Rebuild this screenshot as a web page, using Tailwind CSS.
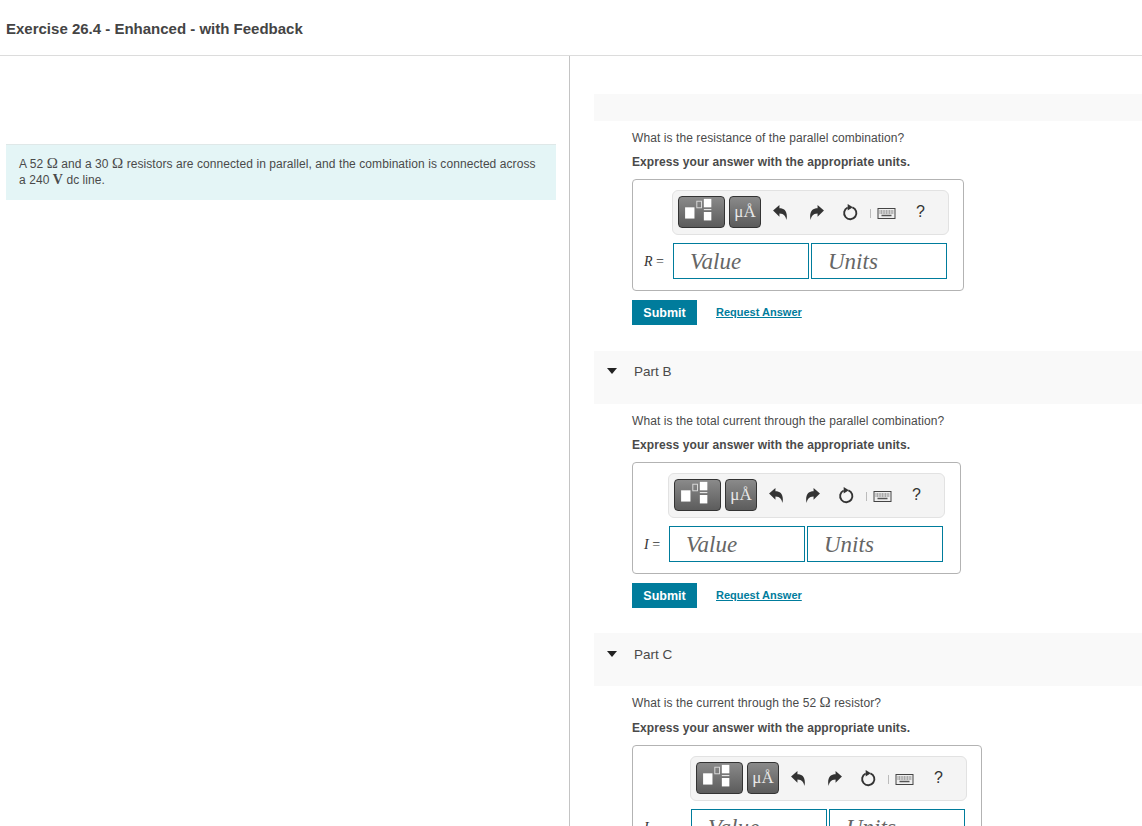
<!DOCTYPE html>
<html>
<head>
<meta charset="utf-8">
<script src="https://cdn.jsdelivr.net/npm/@tailwindcss/browser@4"></script>
</head>
<body class="bg-white overflow-hidden font-['Liberation_Sans',sans-serif] text-[#4a4a4a]">
<div class="w-[1142px] h-[826px] overflow-hidden flex flex-col">
  <header class="h-[56px] shrink-0 border-b border-[#dcdcdc] pl-[6px] pt-[19px] text-[15px] leading-[20px] font-bold text-[#444]">Exercise 26.4 - Enhanced - with Feedback</header>
  <div class="flex flex-1 min-h-0">
    <aside class="w-[570px] shrink-0 border-r border-[#c4c4c4] pl-[6px] pr-[13px] pt-[88px]">
      <div class="h-[56px] bg-[#e4f5f6] border-t border-[#dfe8e8] pl-[13px] pr-[10px] pt-[11px] text-[12px] leading-[16px] tracking-[0.07px] text-[#4a4a4a]">
        A 52 <span class="font-['Liberation_Serif',serif] text-[15px] leading-none">Ω</span> and a 30 <span class="font-['Liberation_Serif',serif] text-[15px] leading-none">Ω</span> resistors are connected in parallel, and the combination is connected across<br>a 240 <span class="font-['Liberation_Serif',serif] font-bold text-[14px] leading-none">V</span> dc line.
      </div>
    </aside>
    <main class="flex-1 min-w-0 pl-[24px] pt-[38px]">
      <div class="h-[27px] bg-[#f9f9f9]"></div>
      <section class="pl-[38px] pt-[9px]">
        <p class="text-[12px] leading-[16px] h-[16px] tracking-[0.08px]">What is the resistance of the parallel combination?</p>
        <p class="text-[12px] leading-[16px] h-[16px] mt-[8px] font-bold tracking-[0.085px]">Express your answer with the appropriate units.</p>
        <div class="mt-[9px] w-[332px] h-[112px] border border-[#b3b3b3] rounded-[4px] pt-[10px] pl-[39px]">
          <div class="flex items-center w-[277px] h-[45px] bg-[#f4f4f4] border border-[#e2e2e2] rounded-[6px] pl-[5px] pb-px">
            <button class="w-[47px] h-[32px] rounded-[4px] border border-[#333] bg-linear-to-b from-[#8a8a8a] to-[#5c5c5c]"><svg viewBox="0 0 47 32" class="w-full h-full"><rect x="6" y="11" width="10" height="12" fill="#fff"/><rect x="18.500" y="4.500" width="5" height="7" fill="none" stroke="#ddd"/><rect x="26" y="2" width="8" height="9" fill="#fff"/><rect x="26" y="13" width="8" height="1" fill="#fff"/><rect x="26" y="16" width="8" height="9" fill="#fff"/></svg></button>
            <button class="ml-[4px] w-[32px] h-[32px] rounded-[4px] border border-[#333] bg-linear-to-b from-[#8a8a8a] to-[#5c5c5c] font-['Liberation_Serif',serif] text-[#e8e8e8] text-[17px] leading-[28px]">μÅ</button>
            <svg viewBox="0 0 16 16" class="w-[17px] h-[17px] ml-[11px]"><path d="M1 6 7 1v3c4 0 7 2 7 8 0 1-.5 3-.5 3-.5-3-2-6-6.500-6v3z" fill="#333"/></svg>
            <svg viewBox="0 0 16 16" class="w-[17px] h-[17px] ml-[19px]"><path d="M15 6 9 1v3C5 4 2 6 2 12c0 1 .5 3 .5 3C3 12 4.500 9 9 9v3z" fill="#333"/></svg>
            <svg viewBox="0 0 18 18" class="w-[17px] h-[17px] ml-[17px]"><path d="M11 3.500a6.500 6.500 0 1 1-5 .2" fill="none" stroke="#333" stroke-width="2"/><path d="M6 0l5.500 3.500L6 7z" fill="#333"/></svg>
            <div class="w-px h-[9px] bg-[#bbb] ml-[11px] mt-[2px]"></div>
            <svg viewBox="0 0 18 11" class="w-[19px] h-[11px] ml-[6px] mt-[2px]"><rect x=".5" y=".5" width="17" height="10" fill="#eee" stroke="#444"/><path d="M2 3h14M2 5h14" stroke="#555" stroke-dasharray="1 .6"/><path d="M4 7.500h10" stroke="#555" stroke-width="1.500"/></svg>
            <span class="ml-[20px] text-[16px] leading-[16px] text-[#333]">?</span>
          </div>
          <div class="flex items-center mt-[8px] -ml-[28px]">
            <span class="w-[29px] font-['Liberation_Serif',serif] text-[14px] text-[#333] whitespace-nowrap"><i class="font-['Liberation_Serif',serif]">R</i> =</span>
            <div class="w-[136px] h-[36px] border border-[#007c9c] pl-[16px] font-['Liberation_Serif',serif] italic text-[23px] leading-[35px] text-[#666]">Value</div>
            <div class="ml-[2px] w-[136px] h-[36px] border border-[#007c9c] pl-[16px] font-['Liberation_Serif',serif] italic text-[23px] leading-[35px] text-[#666]">Units</div>
          </div>
        </div>
        <div class="flex items-center mt-[9px]">
          <button class="w-[65px] h-[25px] pt-px bg-[#007c9c] text-white text-[12.500px] font-bold">Submit</button>
          <a class="ml-[19px] text-[11px] font-bold text-[#007c9c] underline">Request Answer</a>
        </div>
      </section>
      <div class="mt-[26px] h-[53px] bg-[#f9f9f9] flex items-start pt-[13px] pl-[13px] text-[13.500px] leading-[16px]">
        <svg viewBox="0 0 10 6" class="w-[10px] h-[6px] mt-[4px]"><path d="M0 0h10L5 6z" fill="#222"/></svg>
        <span class="ml-[17px]">Part B</span>
      </div>
      <section class="pl-[38px] pt-[9px]">
        <p class="text-[12px] leading-[16px] h-[16px] tracking-[0.08px]">What is the total current through the parallel combination?</p>
        <p class="text-[12px] leading-[16px] h-[16px] mt-[8px] font-bold tracking-[0.085px]">Express your answer with the appropriate units.</p>
        <div class="mt-[9px] w-[329px] h-[112px] border border-[#b3b3b3] rounded-[4px] pt-[10px] pl-[35px]">
          <div class="flex items-center w-[277px] h-[45px] bg-[#f4f4f4] border border-[#e2e2e2] rounded-[6px] pl-[5px] pb-px">
            <button class="w-[47px] h-[32px] rounded-[4px] border border-[#333] bg-linear-to-b from-[#8a8a8a] to-[#5c5c5c]"><svg viewBox="0 0 47 32" class="w-full h-full"><rect x="6" y="11" width="10" height="12" fill="#fff"/><rect x="18.500" y="4.500" width="5" height="7" fill="none" stroke="#ddd"/><rect x="26" y="2" width="8" height="9" fill="#fff"/><rect x="26" y="13" width="8" height="1" fill="#fff"/><rect x="26" y="16" width="8" height="9" fill="#fff"/></svg></button>
            <button class="ml-[4px] w-[32px] h-[32px] rounded-[4px] border border-[#333] bg-linear-to-b from-[#8a8a8a] to-[#5c5c5c] font-['Liberation_Serif',serif] text-[#e8e8e8] text-[17px] leading-[28px]">μÅ</button>
            <svg viewBox="0 0 16 16" class="w-[17px] h-[17px] ml-[11px]"><path d="M1 6 7 1v3c4 0 7 2 7 8 0 1-.5 3-.5 3-.5-3-2-6-6.500-6v3z" fill="#333"/></svg>
            <svg viewBox="0 0 16 16" class="w-[17px] h-[17px] ml-[19px]"><path d="M15 6 9 1v3C5 4 2 6 2 12c0 1 .5 3 .5 3C3 12 4.500 9 9 9v3z" fill="#333"/></svg>
            <svg viewBox="0 0 18 18" class="w-[17px] h-[17px] ml-[17px]"><path d="M11 3.500a6.500 6.500 0 1 1-5 .2" fill="none" stroke="#333" stroke-width="2"/><path d="M6 0l5.500 3.500L6 7z" fill="#333"/></svg>
            <div class="w-px h-[9px] bg-[#bbb] ml-[11px] mt-[2px]"></div>
            <svg viewBox="0 0 18 11" class="w-[19px] h-[11px] ml-[6px] mt-[2px]"><rect x=".5" y=".5" width="17" height="10" fill="#eee" stroke="#444"/><path d="M2 3h14M2 5h14" stroke="#555" stroke-dasharray="1 .6"/><path d="M4 7.500h10" stroke="#555" stroke-width="1.500"/></svg>
            <span class="ml-[20px] text-[16px] leading-[16px] text-[#333]">?</span>
          </div>
          <div class="flex items-center mt-[8px] -ml-[24px]">
            <span class="w-[25px] font-['Liberation_Serif',serif] text-[14px] text-[#333] whitespace-nowrap"><i class="font-['Liberation_Serif',serif]">I</i> =</span>
            <div class="w-[136px] h-[36px] border border-[#007c9c] pl-[16px] font-['Liberation_Serif',serif] italic text-[23px] leading-[35px] text-[#666]">Value</div>
            <div class="ml-[2px] w-[136px] h-[36px] border border-[#007c9c] pl-[16px] font-['Liberation_Serif',serif] italic text-[23px] leading-[35px] text-[#666]">Units</div>
          </div>
        </div>
        <div class="flex items-center mt-[9px]">
          <button class="w-[65px] h-[25px] pt-px bg-[#007c9c] text-white text-[12.500px] font-bold">Submit</button>
          <a class="ml-[19px] text-[11px] font-bold text-[#007c9c] underline">Request Answer</a>
        </div>
      </section>
      <div class="mt-[25px] h-[53px] bg-[#f9f9f9] flex items-start pt-[14px] pl-[13px] text-[13.500px] leading-[16px]">
        <svg viewBox="0 0 10 6" class="w-[10px] h-[6px] mt-[4px]"><path d="M0 0h10L5 6z" fill="#222"/></svg>
        <span class="ml-[17px]">Part C</span>
      </div>
      <section class="pl-[38px] pt-[9px]">
        <p class="text-[12px] leading-[16px] h-[16px] tracking-[0.08px]">What is the current through the 52 <span class="font-['Liberation_Serif',serif] text-[15px] leading-none">Ω</span> resistor?</p>
        <p class="text-[12px] leading-[16px] h-[16px] mt-[9px] font-bold tracking-[0.085px]">Express your answer with the appropriate units.</p>
        <div class="mt-[9px] w-[350px] h-[112px] border border-[#b3b3b3] rounded-[4px] pt-[10px] pl-[57px]">
          <div class="flex items-center w-[277px] h-[45px] bg-[#f4f4f4] border border-[#e2e2e2] rounded-[6px] pl-[5px] pb-px">
            <button class="w-[47px] h-[32px] rounded-[4px] border border-[#333] bg-linear-to-b from-[#8a8a8a] to-[#5c5c5c]"><svg viewBox="0 0 47 32" class="w-full h-full"><rect x="6" y="11" width="10" height="12" fill="#fff"/><rect x="18.500" y="4.500" width="5" height="7" fill="none" stroke="#ddd"/><rect x="26" y="2" width="8" height="9" fill="#fff"/><rect x="26" y="13" width="8" height="1" fill="#fff"/><rect x="26" y="16" width="8" height="9" fill="#fff"/></svg></button>
            <button class="ml-[4px] w-[32px] h-[32px] rounded-[4px] border border-[#333] bg-linear-to-b from-[#8a8a8a] to-[#5c5c5c] font-['Liberation_Serif',serif] text-[#e8e8e8] text-[17px] leading-[28px]">μÅ</button>
            <svg viewBox="0 0 16 16" class="w-[17px] h-[17px] ml-[11px]"><path d="M1 6 7 1v3c4 0 7 2 7 8 0 1-.5 3-.5 3-.5-3-2-6-6.500-6v3z" fill="#333"/></svg>
            <svg viewBox="0 0 16 16" class="w-[17px] h-[17px] ml-[19px]"><path d="M15 6 9 1v3C5 4 2 6 2 12c0 1 .5 3 .5 3C3 12 4.500 9 9 9v3z" fill="#333"/></svg>
            <svg viewBox="0 0 18 18" class="w-[17px] h-[17px] ml-[17px]"><path d="M11 3.500a6.500 6.500 0 1 1-5 .2" fill="none" stroke="#333" stroke-width="2"/><path d="M6 0l5.500 3.500L6 7z" fill="#333"/></svg>
            <div class="w-px h-[9px] bg-[#bbb] ml-[11px] mt-[2px]"></div>
            <svg viewBox="0 0 18 11" class="w-[19px] h-[11px] ml-[6px] mt-[2px]"><rect x=".5" y=".5" width="17" height="10" fill="#eee" stroke="#444"/><path d="M2 3h14M2 5h14" stroke="#555" stroke-dasharray="1 .6"/><path d="M4 7.500h10" stroke="#555" stroke-width="1.500"/></svg>
            <span class="ml-[20px] text-[16px] leading-[16px] text-[#333]">?</span>
          </div>
          <div class="flex items-center mt-[8px] -ml-[46px]">
            <span class="w-[47px] font-['Liberation_Serif',serif] text-[14px] text-[#333] whitespace-nowrap"><i class="font-['Liberation_Serif',serif]">I</i></span>
            <div class="w-[136px] h-[36px] border border-[#007c9c] pl-[16px] font-['Liberation_Serif',serif] italic text-[23px] leading-[35px] text-[#666]">Value</div>
            <div class="ml-[2px] w-[136px] h-[36px] border border-[#007c9c] pl-[16px] font-['Liberation_Serif',serif] italic text-[23px] leading-[35px] text-[#666]">Units</div>
          </div>
        </div>
      </section>
    </main>
  </div>
</div>
</body>
</html>
